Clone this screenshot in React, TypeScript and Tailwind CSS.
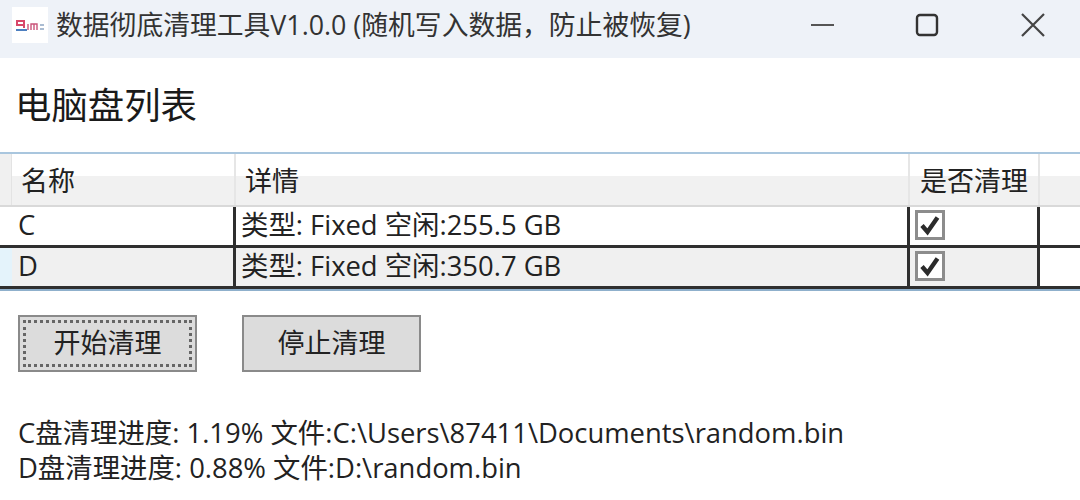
import React from "react";

const font = { fontFamily: '"Open Sans", "Noto Sans CJK SC", sans-serif' };

function Check() {
  return (
    <div className="ml-[5px] mt-[3px] flex h-[30px] w-[30px] items-center justify-center border-[3px] border-[#8c8c8c] bg-white">
      <svg width="22" height="22" viewBox="0 0 22 22" fill="none">
        <path d="M3 11.5 L8.5 18 L18.5 3.5" stroke="#2b2b2b" strokeWidth="4.4" />
      </svg>
    </div>
  );
}

function Row({ name, detail, bg, marker }: { name: string; detail: string; bg: string; marker: string }) {
  return (
    <div className="flex h-[41px] border-b-[3px] border-[#2f2f2f] text-[27.4px] leading-[36px] text-[#222]">
      <div className={`w-[12px] ${marker}`} />
      <div className={`w-[224px] border-r-[3px] border-[#2f2f2f] pl-[6px] ${bg}`}>{name}</div>
      <div className={`w-[674px] border-r-[3px] border-[#2f2f2f] pl-[5px] ${bg}`}>{detail}</div>
      <div className={`w-[130px] border-r-[3px] border-[#2f2f2f] ${bg}`}>
        <Check />
      </div>
      <div className="flex-1 bg-white" />
    </div>
  );
}

function Btn({ label, focus }: { label: string; focus?: boolean }) {
  return (
    <button className="flex h-[57px] w-[179px] items-center justify-center border-[2px] border-[#8a8a8a] bg-[#dcdcdc] p-[3px] text-[27px] text-[#222]">
      <span className={`flex h-full w-full items-center justify-center ${focus ? "border-[3px] border-dotted border-[#666]" : ""}`}>
        {label}
      </span>
    </button>
  );
}

export default function App() {
  return (
    <div className="h-[500px] w-[1080px] overflow-hidden bg-white" style={font}>
      <div className="flex h-[58px] items-center bg-[#eef2f8] pb-[8px] pl-[12px]">
        <div className="flex h-[36px] w-[36px] items-center justify-center bg-white">
          <svg width="30" height="14" viewBox="0 0 30 14">
            <path d="M9 3H2v4h7M9 2v8" fill="none" stroke="#d8476a" strokeWidth="2" />
            <path d="M1 12h11" stroke="#4d7fc0" strokeWidth="2" />
            <path d="M13 6v6M16 12V6h6v6M19 6v6" fill="none" stroke="#c9547a" strokeWidth="1.4" />
            <path d="M25 7h4M25 11h4" fill="none" stroke="#8fa6c4" strokeWidth="1.6" />
          </svg>
        </div>
        <div className="ml-[8px] flex-1 whitespace-nowrap text-[26.8px] text-[#333]">数据彻底清理工具V1.0.0 (随机写入数据，防止被恢复)</div>
        <div className="flex items-center">
          <svg width="24" height="24" viewBox="0 0 24 24" className="mr-[81px]">
            <path d="M1 12h23" stroke="#555" strokeWidth="2" />
          </svg>
          <svg width="24" height="24" viewBox="0 0 24 24" className="mr-[82px]">
            <rect x="2" y="2" width="20" height="20" rx="3" fill="none" stroke="#333" strokeWidth="2.4" />
          </svg>
          <svg width="24" height="24" viewBox="0 0 24 24" className="mr-[35px]">
            <path d="M1 1L23 23M23 1L1 23" stroke="#444" strokeWidth="2.2" />
          </svg>
        </div>
      </div>

      <div className="pl-[15px] pt-[22px] text-[36.4px] leading-[50px] text-[#1a1a1a]">电脑盘列表</div>

      <div className="mt-[22px] border-y-[2px] border-t-[#a9c6de] border-b-[#8fb0cc]">
        <div className="flex h-[51px] bg-gradient-to-b from-white from-44% to-[#f1f1f1] to-44% text-[27px] leading-[54px] text-[#222]">
          <div className="w-[12px] border-r border-[#e3e3e3] bg-[#f0f0f0]" />
          <div className="w-[224px] border-r-[2px] border-[#e6e6e6] pl-[9px]">名称</div>
          <div className="w-[674px] border-r-[2px] border-[#e6e6e6] pl-[9px]">详情</div>
          <div className="w-[130px] border-r-[2px] border-[#e6e6e6] pl-[10px]">是否清理</div>
          <div className="flex-1" />
        </div>
        <div className="border-t-[2px] border-[#d9d9d9]">
          <Row name="C" detail="类型: Fixed 空闲:255.5 GB" bg="bg-white" marker="bg-white" />
          <Row name="D" detail="类型: Fixed 空闲:350.7 GB" bg="bg-[#f0f0f0]" marker="bg-[#e4f3fb]" />
        </div>
      </div>

      <div className="ml-[18px] mt-[24px] flex gap-[45px]">
        <Btn label="开始清理" focus />
        <Btn label="停止清理" />
      </div>

      <div className="ml-[18px] mt-[43px] whitespace-nowrap text-[27.4px] leading-[35px] text-[#222]">
        <div>C盘清理进度: 1.19% 文件:C:\Users\87411\Documents\random.bin</div>
        <div>D盘清理进度: 0.88% 文件:D:\random.bin</div>
      </div>
    </div>
  );
}
